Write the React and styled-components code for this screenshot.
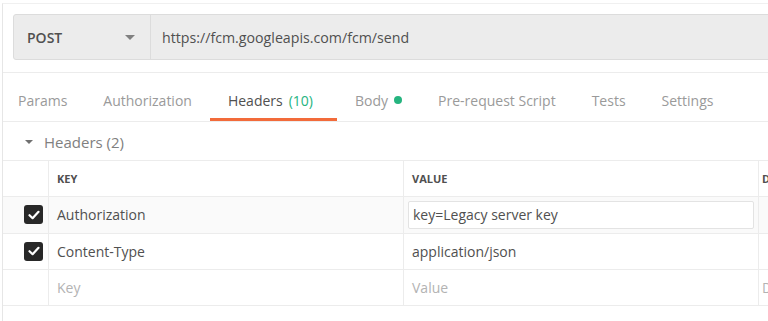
import React from 'react';
import styled, { createGlobalStyle } from 'styled-components';

const GlobalStyle = createGlobalStyle`
  html, body {
    margin: 0;
    padding: 0;
    background: #ffffff;
    overflow: hidden;
  }
  body {
    font-family: "Open Sans", "Noto Sans", "Liberation Sans", sans-serif;
    color: #505050;
  }
`;

const Page = styled.div`
  margin: 3px 0 0 2px;
  border-left: 1px solid #e6e6e6;
  border-top: 1px solid #f0f0f0;
  height: 330px;
  overflow: hidden;
`;

const RequestArea = styled.div`
  padding: 10px 0 12px 10px;
  border-bottom: 1px solid #ececec;
`;

const RequestBar = styled.div`
  display: flex;
  height: 46px;
  box-sizing: border-box;
  width: calc(100% + 20px);
  background: #ececec;
  border: 1px solid #dcdcdc;
  border-radius: 3px;
`;

const MethodSelect = styled.div`
  width: 137px;
  box-sizing: border-box;
  display: flex;
  align-items: center;
  justify-content: space-between;
  padding: 0 15px 0 13px;
  border-right: 1px solid #dcdcdc;
  font-size: 14px;
  font-weight: 600;
  color: #505050;
`;

const Caret = styled.span`
  width: 0;
  height: 0;
  border-left: ${p => p.size}px solid transparent;
  border-right: ${p => p.size}px solid transparent;
  border-top: ${p => p.size}px solid ${p => p.color};
`;

const UrlField = styled.div`
  flex: 1;
  display: flex;
  align-items: center;
  padding-left: 11px;
  font-size: 14.2px;
  color: #505050;
`;

const Tabs = styled.div`
  display: flex;
  height: 48px;
  margin-left: -3px;
  border-bottom: 1px solid #ececec;
`;

const Tab = styled.div`
  display: flex;
  align-items: center;
  gap: 6px;
  padding: 9px 18px 0;
  font-size: 14px;
  color: ${p => (p.active ? '#505050' : '#9a9a9a')};
  border-bottom: 3px solid ${p => (p.active ? '#f26b3a' : 'transparent')};
  white-space: nowrap;
`;

const Count = styled.span`
  color: #26b47f;
  padding-right: 6px;
`;

const Dot = styled.span`
  width: 8px;
  height: 8px;
  border-radius: 50%;
  background: #26b47f;
`;

const SectionTitle = styled.div`
  display: flex;
  align-items: center;
  gap: 11px;
  height: 38px;
  padding: 2px 0 0 22px;
  box-sizing: border-box;
  font-size: 15px;
  color: #808080;
`;

const Table = styled.div`
  border-top: 1px solid #ececec;
`;

const Row = styled.div`
  display: grid;
  grid-template-columns: 45px 355px 355px 1fr;
  height: 36.25px;
  box-sizing: border-box;
  border-bottom: 1px solid #ececec;
  background: ${p => (p.hover ? '#fafafa' : '#ffffff')};
`;

const Cell = styled.div`
  display: flex;
  align-items: center;
  padding-left: ${p => p.pad ?? 8}px;
  padding-right: 4px;
  border-left: ${p => (p.first ? 'none' : '1px solid #ececec')};
  font-size: ${p => (p.head ? 11 : 14)}px;
  font-weight: ${p => (p.head ? 700 : 400)};
  color: ${p => (p.placeholder ? '#b3b3b3' : '#505050')};
  overflow: hidden;
  white-space: nowrap;
`;

const CheckCell = styled(Cell)`
  justify-content: flex-end;
  padding-right: 5px;
  padding-left: 0;
`;

const Checkbox = styled.span`
  width: 19px;
  height: 19px;
  border-radius: 3px;
  background: #282828;
  display: flex;
  align-items: center;
  justify-content: center;
`;

const ValueInput = styled.div`
  flex: 1;
  height: 28px;
  box-sizing: border-box;
  display: flex;
  align-items: center;
  padding-left: 4px;
  background: #ffffff;
  border: 1px solid #e3e3e3;
  border-radius: 2px;
`;

const Check = () => (
  <Checkbox>
    <svg width="12" height="10" viewBox="0 0 12 10">
      <path d="M1.5 5.2 L4.6 8.2 L10.5 1.8" fill="none" stroke="#fff" strokeWidth="2.2" strokeLinecap="round" strokeLinejoin="round" />
    </svg>
  </Checkbox>
);

const headers = [
  { key: 'Authorization', value: 'key=Legacy server key', hover: true },
  { key: 'Content-Type', value: 'application/json' },
];

const App = () => {
  return (
    <>
      <GlobalStyle />
      <Page>
        <RequestArea>
          <RequestBar>
            <MethodSelect>
              POST
              <Caret size={5} color="#808080" />
            </MethodSelect>
            <UrlField>https://fcm.googleapis.com/fcm/send</UrlField>
          </RequestBar>
        </RequestArea>

        <Tabs>
          <Tab>Params</Tab>
          <Tab>Authorization</Tab>
          <Tab active>Headers <Count>(10)</Count></Tab>
          <Tab>Body <Dot /></Tab>
          <Tab>Pre-request Script</Tab>
          <Tab>Tests</Tab>
          <Tab>Settings</Tab>
        </Tabs>

        <SectionTitle>
          <Caret size={4} color="#707070" />
          Headers (2)
        </SectionTitle>

        <Table>
          <Row>
            <Cell first />
            <Cell head>KEY</Cell>
            <Cell head>VALUE</Cell>
            <Cell head pad={3}>DESCRIPTION</Cell>
          </Row>
          {headers.map(h => (
            <Row key={h.key} hover={h.hover}>
              <CheckCell first><Check /></CheckCell>
              <Cell>{h.key}</Cell>
              {h.hover ? (
                <Cell pad={4}><ValueInput>{h.value}</ValueInput></Cell>
              ) : (
                <Cell>{h.value}</Cell>
              )}
              <Cell />
            </Row>
          ))}
          <Row>
            <Cell first />
            <Cell placeholder>Key</Cell>
            <Cell placeholder>Value</Cell>
            <Cell placeholder pad={3}>Description</Cell>
          </Row>
        </Table>
      </Page>
    </>
  );
};

export default App;
